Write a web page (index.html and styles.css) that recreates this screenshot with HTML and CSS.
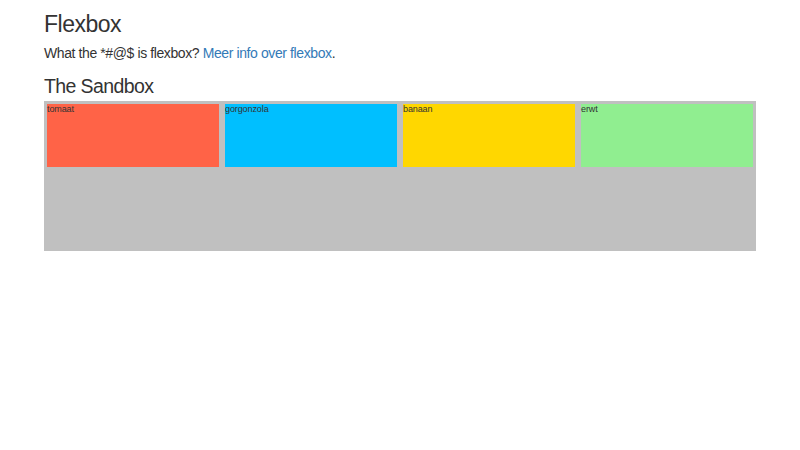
FILE: index.html
```
<!DOCTYPE html>
<html>
<head>
<meta charset="utf-8">
<link rel="stylesheet" href="styles.css">
</head>
<body>
<div class="container">
  <h1 class="title">Flexbox</h1>
  <p class="intro">What the *#@$ is flexbox? <a href="#" class="link">Meer info over flexbox</a>.</p>
  <h2 class="subtitle">The Sandbox</h2>
  <div class="sandbox">
    <div class="item tomaat">tomaat</div>
    <div class="item gorgonzola">gorgonzola</div>
    <div class="item banaan">banaan</div>
    <div class="item erwt">erwt</div>
  </div>
</div>
</body>
</html>
```
FILE: styles.css
```
html, body {
  margin: 0;
  padding: 0;
  background: #fff;
}
body {
  font-family: "Liberation Sans", Arial, sans-serif;
  color: #333;
}
.container {
  width: 712px;
  margin: 0 auto;
  padding-top: 10px;
}
.title {
  font-size: 23px;
  font-weight: normal;
  line-height: 28px;
  letter-spacing: -0.5px;
  margin: 0 0 5px 0;
}
.intro {
  font-size: 14px;
  line-height: 20px;
  letter-spacing: -0.4px;
  margin: 0 0 11px 0;
}
.link {
  color: #337ab7;
  text-decoration: none;
}
.subtitle {
  font-size: 19.5px;
  font-weight: normal;
  line-height: 24px;
  letter-spacing: -0.6px;
  margin: 0 0 3px 0;
}
.sandbox {
  display: flex;
  align-items: flex-start;
  background: #c0c0c0;
  height: 150px;
}
.item {
  flex: 1;
  margin: 3px;
  height: 63px;
  font-size: 9px;
  line-height: 11px;
  letter-spacing: -0.1px;
  color: #333;
}
.tomaat { background: #ff6347; }
.gorgonzola { background: #00bfff; }
.banaan { background: #ffd700; }
.erwt { background: #90ee90; }
```
